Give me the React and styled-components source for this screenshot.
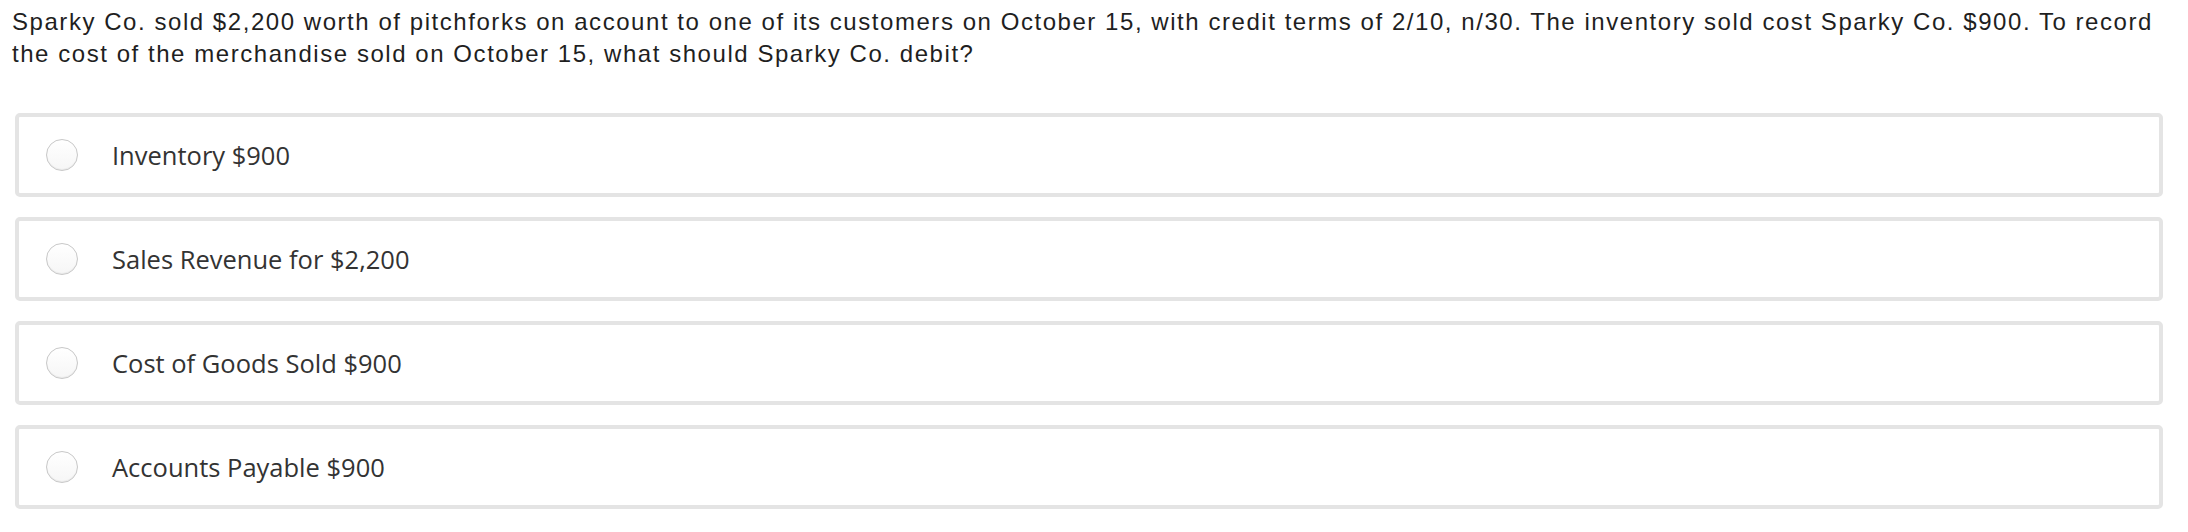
import React from "react";
import styled, { createGlobalStyle } from "styled-components";

const GlobalStyle = createGlobalStyle`
  body {
    margin: 0;
    background: #fff;
  }
`;

const options = [
  "Inventory $900",
  "Sales Revenue for $2,200",
  "Cost of Goods Sold $900",
  "Accounts Payable $900",
];

function App() {
  return (
    <Page>
      <GlobalStyle />
      <Question>
        Sparky Co. sold $2,200 worth of pitchforks on account to one of its
        customers on October 15, with credit terms of 2/10, n/30. The inventory
        sold cost Sparky Co. $900. To record the cost of the merchandise sold on
        October 15, what should Sparky Co. debit?
      </Question>
      <OptionList>
        {options.map((label) => (
          <Option key={label}>
            <Radio />
            <Label>{label}</Label>
          </Option>
        ))}
      </OptionList>
    </Page>
  );
}

const Page = styled.div`
  padding: 6px 25px 0 12px;
`;

const Question = styled.div`
  margin-right: -20px;
  font-family: "Liberation Sans", Arial, sans-serif;
  font-size: 24px;
  line-height: 32px;
  letter-spacing: 1.55px;
  color: #1f1f1f;
`;

const OptionList = styled.div`
  display: flex;
  flex-direction: column;
  gap: 20px;
  margin-top: 43px;
  margin-left: 3px;
`;

const Option = styled.div`
  display: flex;
  align-items: center;
  height: 76px;
  border: 4px solid #e4e4e4;
  border-radius: 5px;
  padding-left: 27px;
`;

const Radio = styled.span`
  flex: none;
  width: 30px;
  height: 30px;
  border-radius: 50%;
  border: 1px solid #c8c8c8;
  background: linear-gradient(#ffffff, #f6f6f6);
  box-shadow: inset 0 -1px 1px rgba(0, 0, 0, 0.05);
`;

const Label = styled.span`
  margin-left: 34px;
  font-family: "Open Sans", sans-serif;
  font-size: 25.5px;
  color: #333;
`;

export default App;
